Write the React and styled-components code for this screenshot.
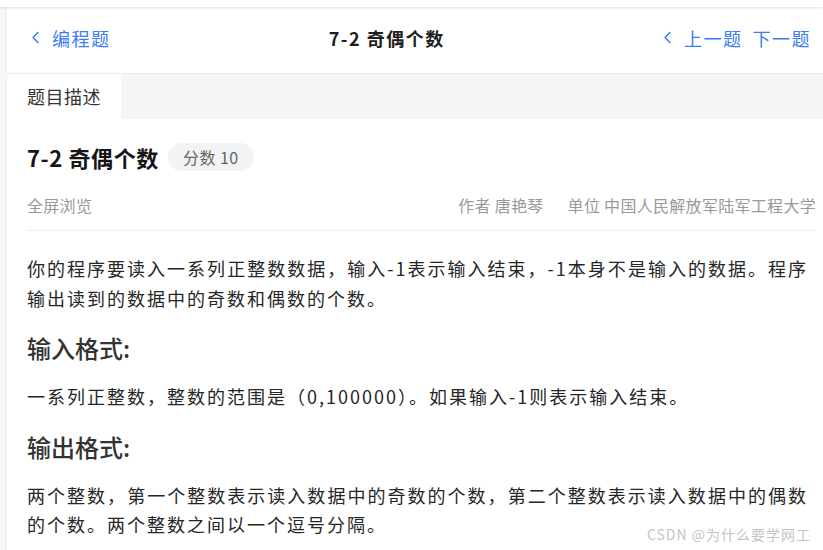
import React from "react";
import styled, { createGlobalStyle } from "styled-components";

const Global = createGlobalStyle`
  html, body { margin: 0; padding: 0; background: #fff; }
  body { font-family: "Noto Sans CJK SC", "Noto Sans", sans-serif; color: #333; }
  * { box-sizing: border-box; }
`;

const Page = styled.div`
  min-height: 100vh;
  display: flex;
  flex-direction: column;
  background: #fff;
  position: relative;
  overflow: hidden;
`;

const TopStrip = styled.div`
  height: 7px;
  background: #fff;
  box-shadow: 0 1px 3px rgba(0, 0, 0, 0.12);
  position: relative;
  z-index: 1;
`;

const Body = styled.div`
  flex: 1;
  display: flex;
`;

const Gutter = styled.div`
  width: 7px;
  background: #f7f7f8;
  border-right: 1px solid #f0f0f0;
`;

const Main = styled.div`
  flex: 1;
  min-width: 0;
  display: flex;
  flex-direction: column;
`;

const Header = styled.header`
  height: 67px;
  border-bottom: 1px solid #ebebeb;
  display: flex;
  align-items: center;
  justify-content: space-between;
  padding: 0 12px 5px 24px;
`;

const NavLink = styled.a`
  display: inline-flex;
  align-items: center;
  gap: ${(p) => (p.$icon ? "12px" : "0")};
  color: #3a7cf3;
  font-size: 18px;
  letter-spacing: 1.5px;
  text-decoration: none;
  cursor: pointer;
`;

const NavGroup = styled.div`
  display: flex;
  align-items: center;
  gap: 10px;
`;

const Title = styled.div`
  font-size: 18px;
  font-weight: 700;
  color: #1e1e1e;
  letter-spacing: 1.5px;
`;

const TabBar = styled.div`
  height: 45px;
  background: #f4f5f7;
  display: flex;
`;

const Tab = styled.div`
  padding: 0 20px;
  line-height: 45px;
  font-size: 18px;
  letter-spacing: 0.5px;
  color: ${(p) => (p.$active ? "#333" : "#666")};
  background: ${(p) => (p.$active ? "#fff" : "transparent")};
`;

const Content = styled.div`
  padding: 24px 7px 0 20px;
`;

const HeadRow = styled.div`
  display: flex;
  align-items: center;
  gap: 9px;
`;

const ProblemTitle = styled.h1`
  margin: 0;
  font-size: 22px;
  line-height: 28px;
  font-weight: 700;
  color: #161616;
  letter-spacing: 0.6px;
`;

const Badge = styled.span`
  height: 28px;
  padding: 0 15px;
  border-radius: 14px;
  background: #f2f3f5;
  color: #666;
  font-size: 16px;
  letter-spacing: 0.5px;
  display: inline-flex;
  align-items: center;
`;

const MetaRow = styled.div`
  margin-top: 22px;
  display: flex;
  justify-content: space-between;
  font-size: 16px;
  line-height: 24px;
  letter-spacing: 0.3px;
  color: #999;
  padding-bottom: 13px;
  border-bottom: 1px solid #eeeeee;
`;

const MetaGroup = styled.div`
  display: flex;
  gap: 24px;
`;

const Article = styled.div`
  margin-top: 23px;
  padding-right: 8px;
  display: flex;
  flex-direction: column;
  gap: 17px;
`;

const Para = styled.p`
  margin: 0;
  font-size: 18px;
  line-height: 29.5px;
  letter-spacing: 2px;
  color: #262626;
  text-align: justify;
`;

const FullLine = styled.span`
  display: block;
  text-align: justify;
  text-align-last: justify;
`;

const SectionTitle = styled.h3`
  margin: 0;
  font-size: 24px;
  line-height: 35px;
  font-weight: 500;
  color: #333;
`;

const Watermark = styled.div`
  position: absolute;
  right: 12px;
  bottom: 6px;
  font-size: 14px;
  letter-spacing: 1px;
  color: #c4c4c4;
  pointer-events: none;
`;

const Chevron = () => (
  <svg width="9" height="13" viewBox="0 0 9 13" fill="none">
    <polyline
      points="7,1.5 2,6.5 7,11.5"
      stroke="currentColor"
      strokeWidth="1.5"
      strokeLinecap="round"
      strokeLinejoin="round"
    />
  </svg>
);

export default function App() {
  return (
    <>
      <Global />
      <Page>
        <TopStrip />
        <Body>
          <Gutter />
          <Main>
            <Header>
              <NavLink $icon>
                <Chevron />
                编程题
              </NavLink>
              <Title>7-2 奇偶个数</Title>
              <NavGroup>
                <NavLink $icon>
                  <Chevron />
                  上一题
                </NavLink>
                <NavLink>下一题</NavLink>
              </NavGroup>
            </Header>
            <TabBar>
              <Tab $active>题目描述</Tab>
            </TabBar>
            <Content>
              <HeadRow>
                <ProblemTitle>7-2 奇偶个数</ProblemTitle>
                <Badge>分数 10</Badge>
              </HeadRow>
              <MetaRow>
                <span>全屏浏览</span>
                <MetaGroup>
                  <span>作者 唐艳琴</span>
                  <span>单位 中国人民解放军陆军工程大学</span>
                </MetaGroup>
              </MetaRow>
              <Article>
                <Para>
                  <FullLine>你的程序要读入一系列正整数数据，输入-1表示输入结束，-1本身不是输入的数据。程序</FullLine>
                  输出读到的数据中的奇数和偶数的个数。
                </Para>
                <SectionTitle>输入格式:</SectionTitle>
                <Para>一系列正整数，整数的范围是（0,100000）。如果输入-1则表示输入结束。</Para>
                <SectionTitle>输出格式:</SectionTitle>
                <Para>
                  <FullLine>两个整数，第一个整数表示读入数据中的奇数的个数，第二个整数表示读入数据中的偶数</FullLine>
                  的个数。两个整数之间以一个逗号分隔。
                </Para>
              </Article>
            </Content>
          </Main>
        </Body>
        <Watermark>CSDN @为什么要学网工</Watermark>
      </Page>
    </>
  );
}
